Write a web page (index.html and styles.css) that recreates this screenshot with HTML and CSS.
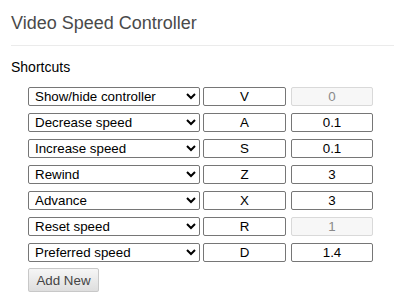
FILE: index.html
```html
<!DOCTYPE html>
<html>
<head>
<meta charset="utf-8">
<link rel="stylesheet" href="styles.css">
</head>
<body>
<h1 class="title">Video Speed Controller</h1>
<h3 class="section">Shortcuts</h3>
<div class="shortcuts">
  <div class="row">
    <select class="action"><option>Show/hide controller</option></select>
    <input class="key" type="text" value="V">
    <input class="value" type="text" value="0" disabled>
  </div>
  <div class="row">
    <select class="action"><option>Decrease speed</option></select>
    <input class="key" type="text" value="A">
    <input class="value" type="text" value="0.1">
  </div>
  <div class="row">
    <select class="action"><option>Increase speed</option></select>
    <input class="key" type="text" value="S">
    <input class="value" type="text" value="0.1">
  </div>
  <div class="row">
    <select class="action"><option>Rewind</option></select>
    <input class="key" type="text" value="Z">
    <input class="value" type="text" value="3">
  </div>
  <div class="row">
    <select class="action"><option>Advance</option></select>
    <input class="key" type="text" value="X">
    <input class="value" type="text" value="3">
  </div>
  <div class="row">
    <select class="action"><option>Reset speed</option></select>
    <input class="key" type="text" value="R">
    <input class="value" type="text" value="1" disabled>
  </div>
  <div class="row">
    <select class="action"><option>Preferred speed</option></select>
    <input class="key" type="text" value="D">
    <input class="value" type="text" value="1.4">
  </div>
  <button class="add" type="button">Add New</button>
</div>
</body>
</html>
```
FILE: styles.css
```css
html, body {
  margin: 0;
  background: #fff;
}
body {
  padding: 0 0 0 11px;
  font-family: "Liberation Sans", Arial, sans-serif;
  color: #000;
}
.title {
  margin: 0;
  padding: 13px 0 11px 0;
  font-size: 18px;
  line-height: 21px;
  font-weight: normal;
  color: #4a4a4a;
  border-bottom: 1px solid #ebebeb;
}
.section {
  margin: 13px 0 0 0;
  font-size: 14px;
  line-height: 16px;
  font-weight: normal;
}
.shortcuts {
  display: flex;
  flex-direction: column;
  gap: 7px;
  padding: 12px 0 0 17px;
}
.row {
  display: flex;
  align-items: center;
  height: 19px;
}
.action, .key, .value {
  box-sizing: border-box;
  height: 19px;
  font-family: "Liberation Sans", Arial, sans-serif;
  font-size: 13.33px;
  color: #000;
  margin: 0;
}
.action {
  width: 172px;
  padding: 0 0 0 2px;
  border: 1px solid #767676;
  border-radius: 2px;
  background: #fff;
}
.key, .value {
  width: 83px;
  border: 1px solid #767676;
  border-radius: 2px;
  text-align: center;
  padding: 0;
  background: #fff;
}
.key {
  margin-left: 3px;
}
.value {
  margin-left: 5px;
  width: 82px;
}
.value:disabled {
  background: #f7f7f7;
  border-color: #d9d9d9;
  color: #8a8a8a;
}
.add {
  align-self: flex-start;
  margin-top: -1px;
  width: 71px;
  height: 24px;
  font-family: "Liberation Sans", Arial, sans-serif;
  font-size: 13.33px;
  color: #444;
  border: 1px solid #c8c8c8;
  border-radius: 2px;
  background: linear-gradient(#f6f6f6, #dedede);
  box-shadow: 0 1px 0 rgba(0,0,0,0.06);
  padding: 0;
}
```
